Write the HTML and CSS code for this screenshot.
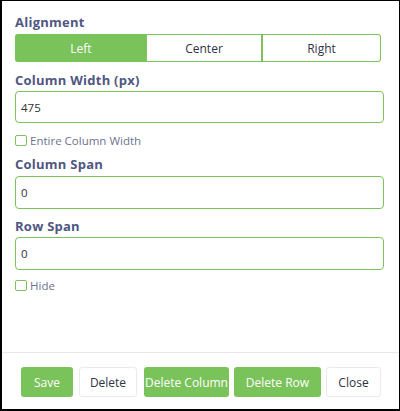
FILE: index.html
```html
<!DOCTYPE html>
<html>
<head>
<meta charset="utf-8">
<link rel="stylesheet" href="styles.css">
</head>
<body>
<div class="frame">
  <div class="content">
    <div class="label lbl-align">Alignment</div>
    <div class="seg">
      <div class="seg-btn seg-left active">Left</div>
      <div class="seg-btn seg-center">Center</div>
      <div class="seg-btn seg-right">Right</div>
    </div>
    <div class="label lbl-width">Column Width (px)</div>
    <div class="input">475</div>
    <label class="check check-entire"><span class="box"></span>Entire Column Width</label>
    <div class="label lbl-span">Column Span</div>
    <div class="input input-span">0</div>
    <div class="label lbl-row">Row Span</div>
    <div class="input input-row">0</div>
    <label class="check check-hide"><span class="box"></span>Hide</label>
  </div>
  <div class="footer">
    <div class="btn green b-save">Save</div>
    <div class="btn white b-delete">Delete</div>
    <div class="btn green b-delcol">Delete Column</div>
    <div class="btn green b-delrow">Delete Row</div>
    <div class="btn white b-close">Close</div>
  </div>
</div>
</body>
</html>
```
FILE: styles.css
```css
* { box-sizing: border-box; }
html, body { margin: 0; padding: 0; background: #fff; }
body { font-family: "Open Sans", "Liberation Sans", sans-serif; }
.frame {
  width: 400px;
  height: 411px;
  border: 1px solid #000;
  border-left-width: 2px;
  border-bottom-width: 2px;
  display: flex;
  flex-direction: column;
  background: #fff;
}
.content {
  flex: 1;
  padding: 13px 15px 0 13px;
  display: flex;
  flex-direction: column;
}
.label {
  font-size: 13px;
  font-weight: 700;
  letter-spacing: 0.25px;
  color: #4f5782;
  line-height: 16px;
  height: 16px;
}
.lbl-align { margin-bottom: 4px; }
.lbl-width { margin-top: 10px; margin-bottom: 3px; }
.lbl-span { margin-top: 7px; margin-bottom: 4px; }
.lbl-row { margin-top: 9px; margin-bottom: 3px; }
.seg {
  display: flex;
  height: 28px;
  width: 366px;
  font-size: 12px;
  color: #2f3445;
}
.seg-btn {
  display: flex;
  align-items: center;
  justify-content: center;
  border: 1.5px solid #7cc35c;
}
.seg-left { width: 131px; border-radius: 3px 0 0 3px; border-right: none; }
.seg-center { width: 117px; border-right-width: 2px; }
.seg-right { flex: 1; border-left: none; border-radius: 0 3px 3px 0; }
.seg-btn.active { background: #7ac25a; color: #fff; border-color: #7ac25a; }
.input {
  height: 32px;
  width: 369px;
  border: 1.5px solid #7cc35c;
  border-radius: 4px;
  padding-left: 5px;
  display: flex;
  align-items: center;
  font-size: 11.5px;
  color: #333;
}
.input-span, .input-row { height: 33px; }
.check {
  display: flex;
  align-items: center;
  height: 18px;
  font-size: 11.5px;
  color: #6d7290;
}
.check-entire { margin-top: 8px; }
.check-hide { margin-top: 6px; }
.box {
  width: 12px;
  height: 11px;
  border: 1.5px solid #7cc35c;
  border-radius: 2px;
  margin-right: 3px;
}
.footer {
  height: 57px;
  border-top: 1px solid #e6e8ec;
  padding: 14px 0 0 19px;
  display: flex;
  gap: 6px;
}
.btn {
  height: 30px;
  border-radius: 3px;
  display: flex;
  align-items: center;
  justify-content: center;
  font-size: 12px;
  white-space: nowrap;
}
.green { background: #7ac25a; color: #fff; }
.white { background: #fff; color: #2f3445; border: 1px solid #e8eaee; }
.b-save { width: 52px; }
.b-delete { width: 58px; }
.b-delcol { width: 85px; margin-left: 1px; }
.b-delrow { width: 87px; margin-left: -1px; }
.b-close { width: 55px; margin-left: -1px; }
```
